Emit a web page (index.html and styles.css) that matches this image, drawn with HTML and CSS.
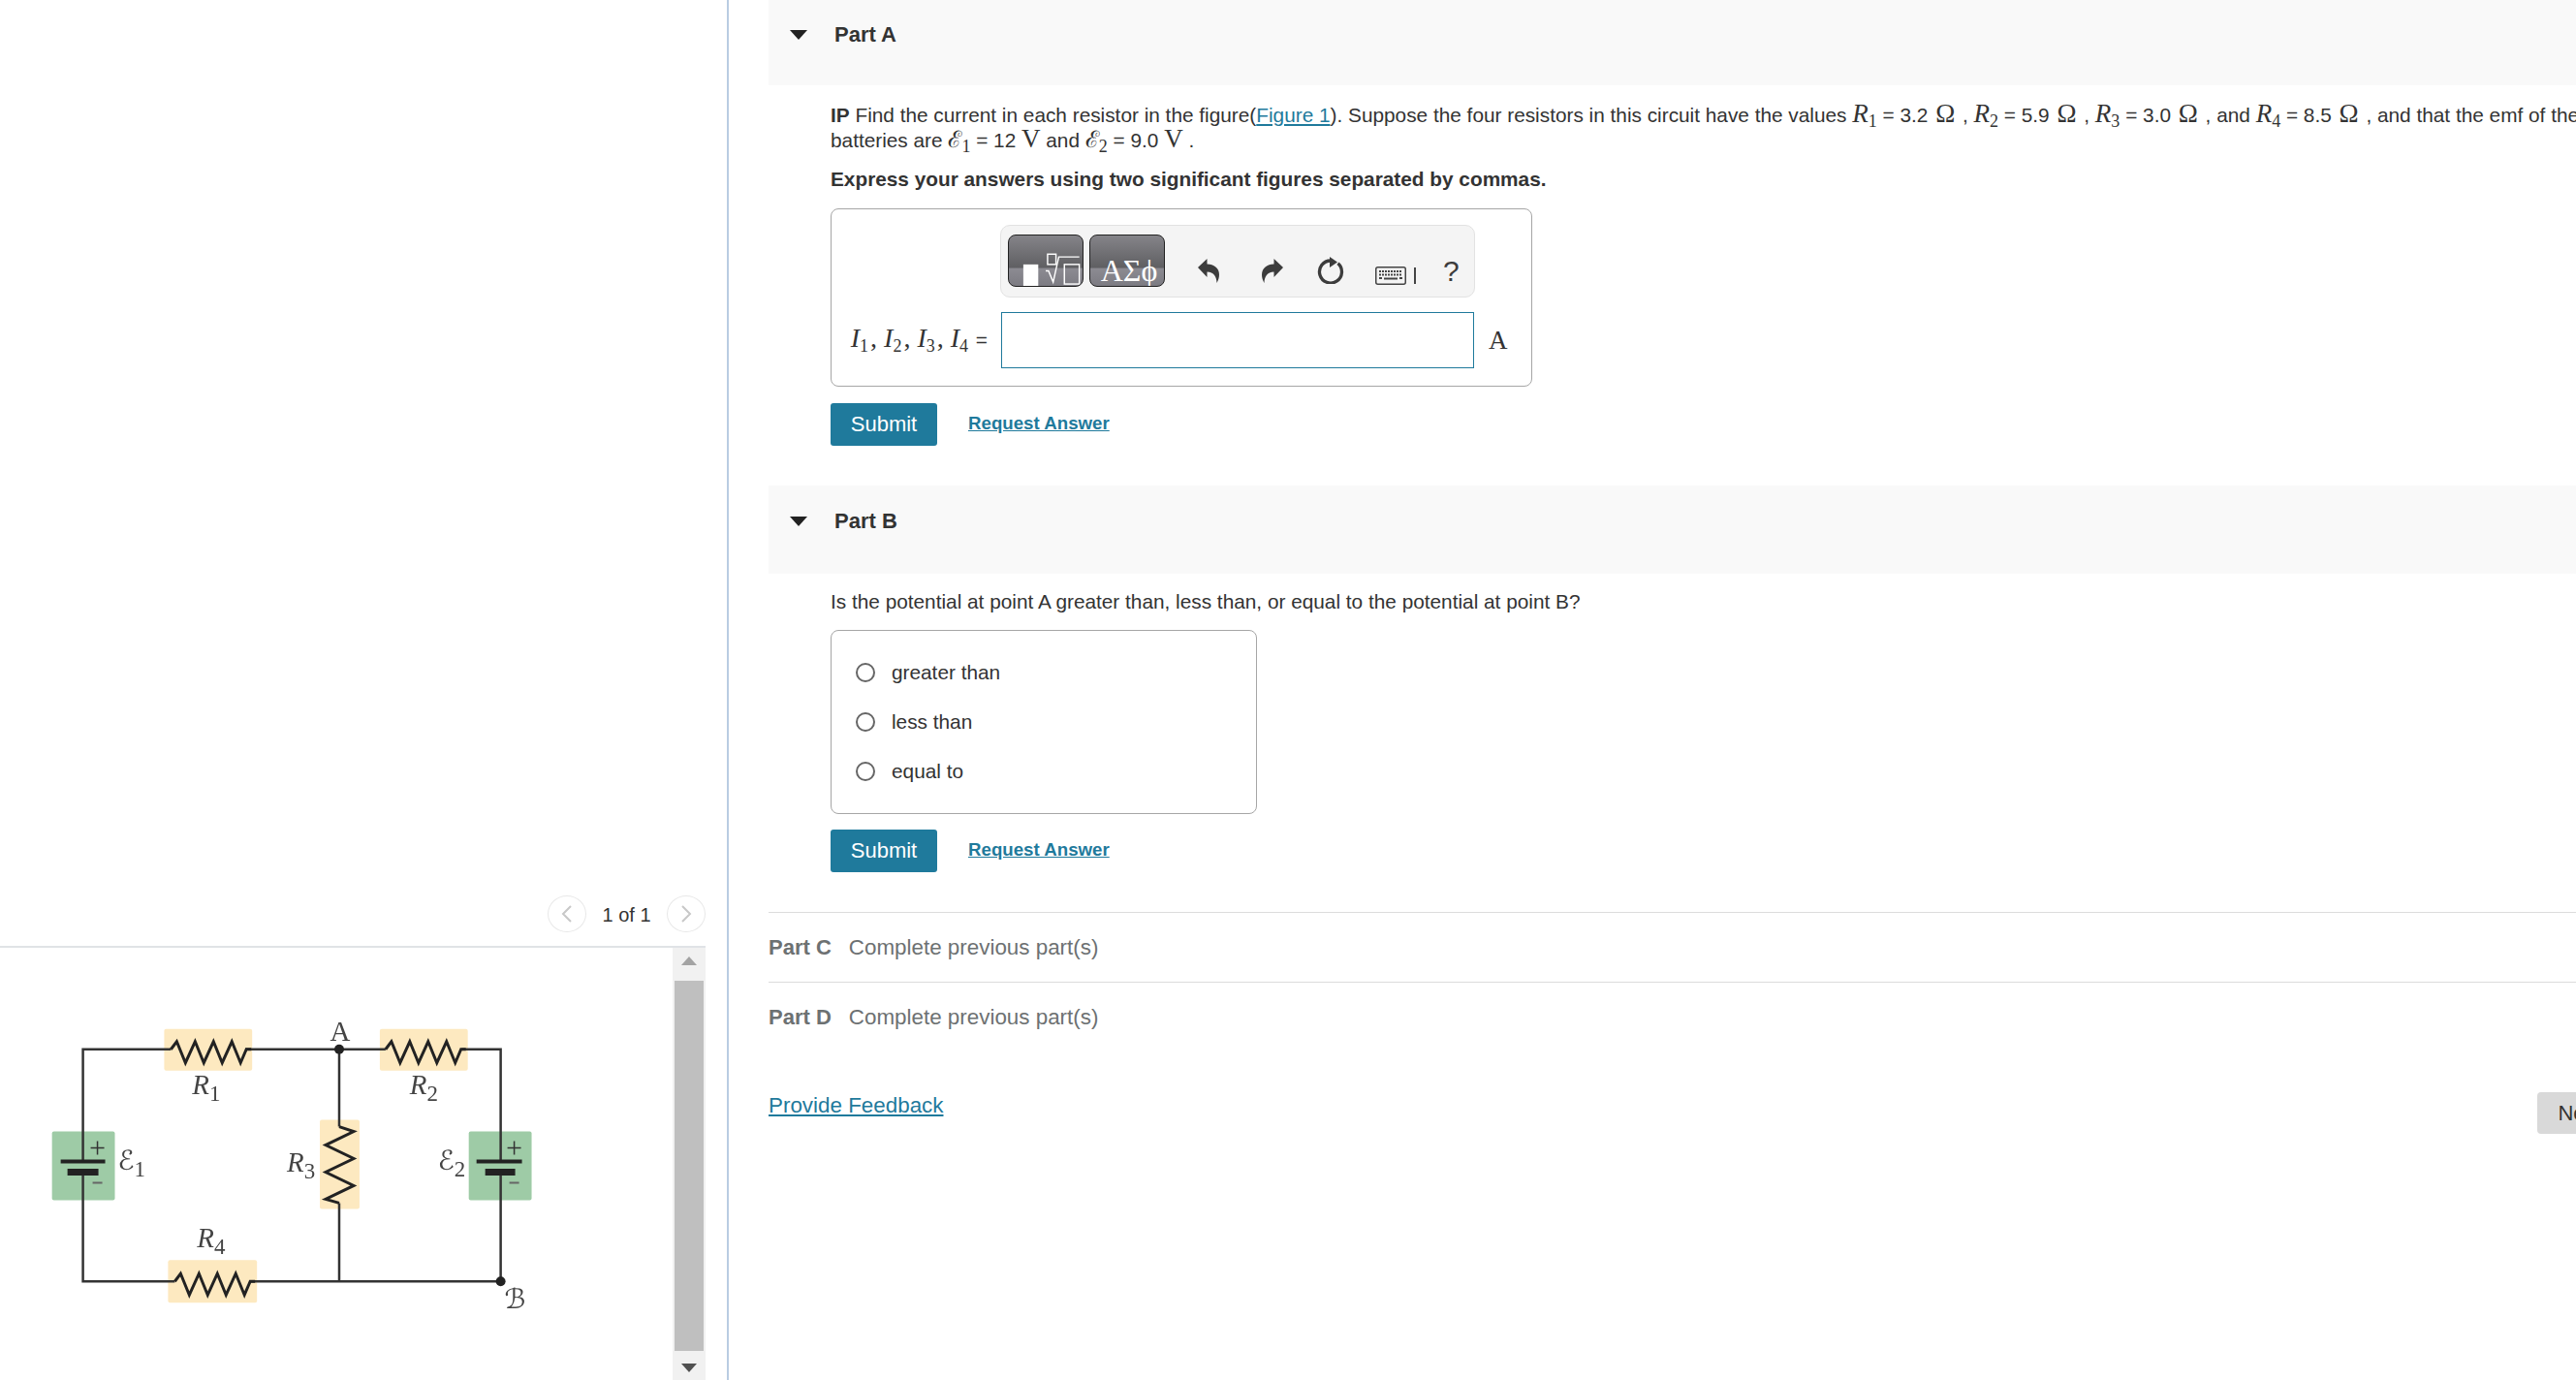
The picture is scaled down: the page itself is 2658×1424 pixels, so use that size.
FILE: index.html
```html
<!DOCTYPE html>
<html lang="en">
<head>
<meta charset="UTF-8">
<title>Part A</title>
<link rel="stylesheet" href="styles.css">
</head>
<body>

<div class="pagina">

  <!-- Figure column -->
  <aside class="figura">
    <div class="paginador">
      <span class="flecha"><svg viewBox="0 0 14 20"><path d="M11 2 3 10l8 8"/></svg></span>
      <span class="contador">1 of 1</span>
      <span class="flecha"><svg viewBox="0 0 14 20"><path d="m3 2 8 8-8 8"/></svg></span>
    </div>
    <div class="visor">
      <svg class="circuito" viewBox="0 0 694 447">
        <g class="fondo-r">
          <rect x="169" y="84" width="91" height="43" rx="2"/>
          <rect x="392" y="84" width="91" height="43" rx="2"/>
          <rect x="330" y="178" width="41" height="92" rx="2"/>
          <rect x="173" y="323" width="92" height="44" rx="2"/>
        </g>
        <g class="fondo-b">
          <rect x="53" y="190" width="65" height="71" rx="2"/>
          <rect x="484" y="190" width="65" height="71" rx="2"/>
        </g>
        <path class="cable" d="M85 221V105H176M253 105H398M477 105H517V221M85 232V345H180M258 345H517V232M350 105V185M350 264V345"/>
        <path class="zigzag" d="M176 105l6-8 9 22 10-22 9 22 10-22 9 22 10-22 9 22 6-14h5"/>
        <path class="zigzag" d="M398 105l6-8 9 22 10-22 9 22 10-22 9 22 10-22 9 22 6-14h5"/>
        <path class="zigzag" d="M180 345l6-8 9 22 10-22 9 22 10-22 9 22 10-22 9 22 6-14h5"/>
        <path class="zigzag" d="M350 185l15 5-29 14 29 14-29 14 29 14-29 14 14 4"/>
        <circle class="nodo" cx="350" cy="105" r="5"/>
        <circle class="nodo" cx="517" cy="345" r="5"/>
        <path class="placa" d="M62 221h46M492 221h47"/>
        <path class="placa gruesa" d="M69 232h32M501 232h31"/>
        <path class="signo" d="M100 200v14M93 207h14M531 200v14M524 207h14"/>
        <path class="signo menos" d="M95 243h10M526 243h10"/>
        <text class="rotulo" x="351" y="96" text-anchor="middle">A</text>
        <text class="rotulo cur" x="198" y="151">R<tspan class="ind" dy="7">1</tspan></text>
        <text class="rotulo cur" x="423" y="151">R<tspan class="ind" dy="7">2</tspan></text>
        <text class="rotulo cur" x="296" y="232">R<tspan class="ind" dy="7">3</tspan></text>
        <text class="rotulo cur" x="203" y="310">R<tspan class="ind" dy="7">4</tspan></text>
        <text class="rotulo esc" x="121" y="230">ℰ<tspan class="ind" dy="7">1</tspan></text>
        <text class="rotulo esc" x="452" y="230">ℰ<tspan class="ind" dy="7">2</tspan></text>
        <text class="rotulo esc" x="521" y="373">ℬ</text>
      </svg>
      <div class="barra">
        <span class="tri arriba"></span>
        <div class="pulgar"></div>
        <span class="tri abajo"></span>
      </div>
    </div>
  </aside>

  <!-- Question column -->
  <main class="preguntas">
    <div class="contenido">

      <section class="parte">
        <header class="cabecera"><span class="triangulo"></span><h2>Part A</h2></header>
        <div class="cuerpo">
          <p class="enunciado"><b>IP</b> Find the current in each resistor in the figure(<a href="#">Figure 1</a>). Suppose the four resistors in this circuit have the values <span class="m"><i>R</i><sub>1</sub></span> = 3.2 <span class="m om">Ω</span> , <span class="m"><i>R</i><sub>2</sub></span> = 5.9 <span class="m om">Ω</span> , <span class="m"><i>R</i><sub>3</sub></span> = 3.0 <span class="m om">Ω</span> , and <span class="m"><i>R</i><sub>4</sub></span> = 8.5 <span class="m om">Ω</span> , and that the emf of the<br>batteries are <span class="m esc">ℰ<sub>1</sub></span> = 12 <span class="m">V</span> and <span class="m esc">ℰ<sub>2</sub></span> = 9.0 <span class="m">V</span> .</p>
          <p class="instruccion">Express your answers using two significant figures separated by commas.</p>

          <div class="caja caja-resp">
            <div class="herramientas">
              <span class="plantilla">
                <svg viewBox="0 0 78 54">
                  <rect x="15" y="31" width="16" height="23" fill="#fff"/>
                  <rect class="hueco" x="41" y="20" width="9" height="11"/>
                  <path class="hueco" d="M39 38h3l5 12 6-27h22"/>
                  <rect class="hueco" x="59" y="31" width="16" height="21"/>
                </svg>
              </span>
              <span class="plantilla griega">ΑΣϕ</span>
              <svg class="ico deshacer" viewBox="0 0 24 26"><path d="M0 9 9.500 0v5.500c7 0 12.500 4 12.500 11 0 3-1 6-2.500 8.500 0-6-3-11.500-10-11.500v5.500z"/></svg>
              <svg class="ico rehacer" viewBox="0 0 24 26"><path d="M0 9 9.500 0v5.500c7 0 12.500 4 12.500 11 0 3-1 6-2.500 8.500 0-6-3-11.500-10-11.500v5.500z"/></svg>
              <svg class="ico recarga" viewBox="0 0 28 28"><path class="aro" d="M14 4A11.500 11.500 0 1 0 21.500 6.800"/><path d="m13 0 8 5.500-8 5.500z"/></svg>
              <svg class="teclado" viewBox="0 0 32 19">
                <rect x=".75" y=".75" width="30.500" height="17.500" rx="2" fill="none" stroke="#444" stroke-width="1.500"/>
                <path d="M4 5h24M4 8.500h24" stroke="#444" stroke-width="2" stroke-dasharray="2 1"/>
                <path d="M4 12h3M9 12.500h14M25 12h3" stroke="#444" stroke-width="2"/>
              </svg>
              <span class="cursorcito"></span>
              <span class="ayuda">?</span>
            </div>
            <div class="fila-resp">
              <label class="etiqueta"><span class="m"><i>I</i><sub>1</sub>, <i>I</i><sub>2</sub>, <i>I</i><sub>3</sub>, <i>I</i><sub>4</sub></span> =</label>
              <div class="entrada"></div>
              <span class="m unidad">A</span>
            </div>
          </div>

          <div class="acciones">
            <button class="enviar">Submit</button>
            <a class="pedir" href="#">Request Answer</a>
          </div>
        </div>
      </section>

      <section class="parte parte-b">
        <header class="cabecera"><span class="triangulo"></span><h2>Part B</h2></header>
        <div class="cuerpo">
          <p class="pregunta">Is the potential at point A greater than, less than, or equal to the potential at point B?</p>
          <div class="caja caja-op">
            <div class="opcion"><span class="radio"></span>greater than</div>
            <div class="opcion"><span class="radio"></span>less than</div>
            <div class="opcion"><span class="radio"></span>equal to</div>
          </div>
          <div class="acciones">
            <button class="enviar">Submit</button>
            <a class="pedir" href="#">Request Answer</a>
          </div>
        </div>
      </section>

      <div class="bloqueada primera"><b>Part C</b>Complete previous part(s)</div>
      <div class="bloqueada"><b>Part D</b>Complete previous part(s)</div>

      <div class="pie">
        <a class="opinion" href="#">Provide Feedback</a>
        <button class="siguiente">Next</button>
      </div>

    </div>
  </main>

</div>

</body>
</html>
```

FILE: styles.css
```css
/* ====== Base ====== */
*{box-sizing:border-box;}
html,body{
  height:100%;
  margin:0;
  background:#fff;
  overflow:hidden;
}
body{
  font-family:"Liberation Sans",Arial,sans-serif;
  font-size:20.8px;
  color:#333;
}
.pagina{
  display:flex;
  height:1424px;
}

/* ====== Figure column ====== */
.figura{
  width:752px;
  flex:none;
  padding-right:22px;
  border-right:2px solid #b9cce2;
  display:flex;
  flex-direction:column;
  justify-content:flex-end;
}
.paginador{
  display:flex;
  justify-content:flex-end;
  align-items:center;
  height:53px;
  padding-bottom:14px;
}
.flecha{
  width:40px;
  height:38px;
  border:1px solid #e8e8e8;
  border-radius:50%;
  display:flex;
  align-items:center;
  justify-content:center;
}
.flecha svg{
  width:14px;
  height:20px;
  fill:none;
  stroke:#c8c8c8;
  stroke-width:2;
}
.contador{
  width:83px;
  padding-top:3px;
  text-align:center;
  font-size:20px;
}
.visor{
  height:448px;
  border-top:2px solid #e0e3e6;
  display:flex;
}
.circuito{
  width:694px;
  height:446px;
  flex:none;
  filter:blur(.5px);
}
.barra{
  width:34px;
  background:#f1f1f1;
  display:flex;
  flex-direction:column;
  align-items:center;
  padding:0 2px;
}
.pulgar{
  width:30px;
  height:382px;
  background:#bfbfbf;
  margin:16px 0 13px;
}
.tri{
  width:0;
  height:0;
  border-left:8px solid transparent;
  border-right:8px solid transparent;
}
.arriba{
  border-bottom:9px solid #a3a3a3;
  margin-top:9px;
}
.abajo{
  border-top:9px solid #505050;
}

/* Circuit drawing */
.fondo-r rect{fill:#fde9c0;}
.fondo-b rect{fill:#9ecba6;}
.cable{fill:none;stroke:#333;stroke-width:2.500;}
.zigzag{fill:none;stroke:#222;stroke-width:3;}
.nodo{fill:#222;}
.placa{fill:none;stroke:#222;stroke-width:4;}
.placa.gruesa{stroke-width:7;}
.signo{fill:none;stroke:#333;stroke-width:1.500;}
.signo.menos{stroke:#666;stroke-width:2;}
.rotulo{
  font-family:"Liberation Serif",serif;
  font-size:29px;
  fill:#444;
}
.rotulo.cur{font-style:italic;}
.rotulo.esc{font-family:"DejaVu Serif","DejaVu Sans",serif;font-size:28px;}
.rotulo .ind{
  font-family:"Liberation Serif",serif;
  font-style:normal;
  font-size:23px;
}

/* ====== Question column ====== */
.preguntas{
  flex:1;
  min-width:0;
  overflow:hidden;
  padding-left:41px;
}
.contenido{width:1913px;}
.cabecera{
  height:88px;
  background:#f9f9f9;
  display:flex;
  align-items:flex-start;
  padding:23px 0 0 22px;
  gap:28px;
}
.cabecera h2{
  margin:0;
  font-size:22px;
  line-height:26px;
  font-weight:700;
  color:#333;
}
.triangulo{
  width:0;
  height:0;
  margin-top:8px;
  border-left:9px solid transparent;
  border-right:9px solid transparent;
  border-top:10px solid #222;
}
.cuerpo{padding-left:64px;}
.parte-b .cabecera{
  height:91px;
  margin-top:41px;
  padding-top:24px;
}

p{margin:0;}
.enunciado{
  padding-top:18px;
  line-height:26px;
  white-space:nowrap;
}
.enunciado a,.opinion,.pedir{color:#1f7a9c;}
.instruccion{
  margin-top:14px;
  line-height:26px;
  font-weight:700;
}
.m{
  font-family:"Liberation Serif",serif;
  font-size:27px;
  line-height:20px;
}
.m sub{
  font-size:18px;
  line-height:0;
  vertical-align:-5px;
}
.m.om{margin:0 2px;}
.m.esc{font-family:"DejaVu Serif",serif;font-size:24px;}
.m.esc sub{font-family:"Liberation Serif",serif;}

/* Answer boxes */
.caja{
  border:1px solid #a6a6a6;
  border-radius:8px;
}
.caja-resp{
  width:724px;
  height:184px;
  margin-top:17px;
  padding:16px 0 0 174px;
}
.herramientas{
  width:490px;
  height:75px;
  background:#f4f4f4;
  border:1px solid #e2e2e2;
  border-radius:10px;
  display:flex;
  align-items:flex-start;
  padding:9px 0 0 7px;
}
.plantilla{
  flex:none;
  width:78px;
  height:54px;
  margin-right:6px;
  border:1px solid #222;
  border-radius:8px;
  background:linear-gradient(180deg,#858489 0,#5f5f62 64%,#8c8b92 65%,#7c7b82 100%);
  overflow:hidden;
}
.plantilla svg{width:100%;height:100%;display:block;}
.hueco{fill:none;stroke:#fff;stroke-width:1.500;}
.griega{
  font-family:"Liberation Serif",serif;
  font-size:32px;
  color:#fff;
  text-align:center;
  line-height:72px;
  padding-left:4px;
}
.ico{
  flex:none;
  width:24px;
  height:26px;
  fill:#3c3c3c;
  margin-top:25px;
}
.deshacer{margin-left:28px;}
.rehacer{margin-left:40px;transform:scaleX(-1);}
.ico.recarga{width:28px;height:28px;margin:23px 0 0 35px;}
.aro{fill:none;stroke:#3c3c3c;stroke-width:3.300;}
.teclado{flex:none;width:32px;height:19px;margin:33px 0 0 32px;}
.cursorcito{flex:none;width:2px;height:17px;background:#444;margin:34px 0 0 8px;}
.ayuda{
  font-size:30px;
  line-height:34px;
  margin:21px 0 0 28px;
  color:#3c3c3c;
}
.fila-resp{
  display:flex;
  align-items:center;
  position:relative;
  margin-top:15px;
  padding-left:1px;
}
.etiqueta{
  position:absolute;
  right:100%;
  margin-right:13px;
  white-space:nowrap;
}
.etiqueta .m{font-size:28px;}
.etiqueta sub{margin-right:2px;}
.entrada{
  width:488px;
  height:58px;
  border:1px solid #1f7a9c;
  background:#fff;
}
.unidad{margin-left:15px;}

/* Buttons */
.acciones{
  display:flex;
  align-items:center;
  gap:32px;
  margin-top:17px;
  height:44px;
}
.enviar{
  width:110px;
  height:44px;
  background:#1f7a9c;
  border:none;
  border-radius:3px;
  color:#fff;
  font:22px "Liberation Sans",Arial,sans-serif;
}
.pedir{
  font-size:18.700px;
  font-weight:700;
  margin-top:-2px;
}

/* Part B */
.pregunta{
  padding-top:16px;
  line-height:26px;
}
.caja-op{
  width:440px;
  height:190px;
  margin-top:16px;
  padding-top:17px;
}
.caja-op + .acciones{margin-top:16px;}
.opcion{
  height:51px;
  display:flex;
  align-items:center;
  padding-left:25px;
  font-size:20.800px;
}
.radio{
  width:20px;
  height:20px;
  border:2px solid #666;
  border-radius:50%;
  margin-right:17px;
}

/* Locked parts */
.bloqueada{
  height:72px;
  border-top:1px solid #dcdcdc;
  display:flex;
  align-items:center;
  color:#6d7172;
  font-size:22.400px;
}
.bloqueada b{
  font-size:22px;
  margin-right:18px;
}
.bloqueada.primera{margin-top:41px;}

/* Footer */
.pie{
  display:flex;
  justify-content:space-between;
  align-items:flex-start;
  margin-top:42px;
}
.opinion{
  font-size:22.400px;
  line-height:28px;
}
.siguiente{
  width:88px;
  height:43px;
  background:#d9d9d9;
  border:none;
  border-radius:4px;
  color:#333;
  font:22px "Liberation Sans",Arial,sans-serif;
}
```
